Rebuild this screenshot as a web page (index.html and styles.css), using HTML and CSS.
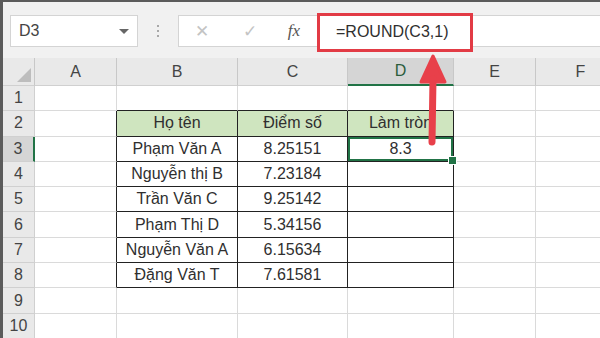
FILE: index.html
```html
<!DOCTYPE html>
<html lang="vi">
<head>
  <meta charset="UTF-8" />
  <title>ROUND - Excel</title>
  <link rel="stylesheet" href="styles.css">
</head>
<body>
  <div class="window">
    <div class="toolbar">
      <div class="name-box">
        <span>D3</span>
        <span class="caret"></span>
      </div>
      <div class="grip"><i></i><i></i><i></i></div>
      <div class="formula-bar">
        <span class="btn cancel">✕</span>
        <span class="btn ok">✓</span>
        <span class="btn fx">fx</span>
        <div class="formula">=ROUND(C3,1)</div>
      </div>
    </div>

    <div class="sheet">
      <div class="ch corner"></div>
      <div class="ch">A</div>
      <div class="ch">B</div>
      <div class="ch">C</div>
      <div class="ch active">D</div>
      <div class="ch">E</div>
      <div class="ch">F</div>

      <div class="rh">1</div>
      <div class="c"></div><div class="c top"></div><div class="c top"></div><div class="c top"></div><div class="c"></div><div class="c"></div>

      <div class="rh">2</div>
      <div class="c left"></div><div class="c t head">Họ tên</div><div class="c t head">Điểm số</div><div class="c t head">Làm tròn</div><div class="c"></div><div class="c"></div>

      <div class="rh active">3</div>
      <div class="c left"></div><div class="c t">Phạm Văn A</div><div class="c t">8.25151</div><div class="c t selected">8.3</div><div class="c"></div><div class="c"></div>

      <div class="rh">4</div>
      <div class="c left"></div><div class="c t">Nguyễn thị B</div><div class="c t">7.23184</div><div class="c t"></div><div class="c"></div><div class="c"></div>

      <div class="rh">5</div>
      <div class="c left"></div><div class="c t">Trần Văn C</div><div class="c t">9.25142</div><div class="c t"></div><div class="c"></div><div class="c"></div>

      <div class="rh">6</div>
      <div class="c left"></div><div class="c t">Phạm Thị D</div><div class="c t">5.34156</div><div class="c t"></div><div class="c"></div><div class="c"></div>

      <div class="rh">7</div>
      <div class="c left"></div><div class="c t">Nguyễn Văn A</div><div class="c t">6.15634</div><div class="c t"></div><div class="c"></div><div class="c"></div>

      <div class="rh">8</div>
      <div class="c left"></div><div class="c t">Đặng Văn T</div><div class="c t">7.61581</div><div class="c t"></div><div class="c"></div><div class="c"></div>

      <div class="rh">9</div>
      <div class="c"></div><div class="c"></div><div class="c"></div><div class="c"></div><div class="c"></div><div class="c"></div>

      <div class="rh">10</div>
      <div class="c"></div><div class="c"></div><div class="c"></div><div class="c"></div><div class="c"></div><div class="c"></div>
    </div>

    <!-- flèche rouge vers la barre de formule -->
    <svg class="arrow" width="40" height="95" viewBox="0 0 40 95">
      <path d="M20 3 L32 29 L8 29 Z" fill="#e8404a" stroke="#e8404a" stroke-width="3" stroke-linejoin="round"/>
      <line x1="20" y1="26" x2="19" y2="89" stroke="#e8404a" stroke-width="7" stroke-linecap="round"/>
    </svg>
  </div>
</body>
</html>
```

FILE: styles.css
```css
:root {
  --frame: #5b5b5b;
  --bar: #f1f1f1;
  --head: #e9e9e9;
  --head-active: #d5d5d5;
  --grid: #dadada;
  --ink: #2f2f2f;
  --green: #217346;
  --fill: #cfe5bf;
  --red: #e23b45;
}

* {
  margin: 0;
  padding: 0;
  box-sizing: border-box;
}

body {
  font-family: 'Liberation Sans', Arial, sans-serif;
  color: var(--ink);
  background: #ffffff;
  width: 600px;
  height: 338px;
  overflow: hidden;
}

.window {
  position: relative;
  height: 338px;
  border-left: 3px solid var(--frame);
  border-top: 2px solid var(--frame);
  overflow: hidden;
}

.toolbar {
  height: 56px;
  background: var(--bar);
  display: flex;
  align-items: flex-start;
  padding-top: 13px;
  padding-left: 7px;
}

.name-box {
  width: 128px;
  height: 32px;
  background: #ffffff;
  border: 1px solid #d4d4d4;
  display: flex;
  align-items: center;
  justify-content: space-between;
  padding: 0 8px 0 8px;
  font-size: 16px;
  color: #444;
}

.caret {
  width: 0;
  height: 0;
  border-left: 5px solid transparent;
  border-right: 5px solid transparent;
  border-top: 5px solid #666;
}

.grip {
  width: 40px;
  height: 32px;
  display: flex;
  flex-direction: column;
  align-items: center;
  justify-content: center;
  gap: 3px;
}

.grip i {
  width: 2px;
  height: 2px;
  background: #a8a8a8;
}

.formula-bar {
  flex: 1;
  height: 32px;
  background: #ffffff;
  border: 1px solid #d4d4d4;
  border-right: none;
  display: flex;
  align-items: center;
}

.btn {
  color: #c4c4c4;
  font-size: 17px;
  text-align: center;
}

.btn.cancel {
  width: 46px;
}

.btn.ok {
  width: 50px;
}

.btn.fx {
  width: 38px;
  font-family: 'Liberation Serif', serif;
  font-style: italic;
  color: #555;
}

.formula {
  margin-left: 4px;
  width: 156px;
  height: 39px;
  margin-top: 2px;
  border: 3px solid var(--red);
  background: #ffffff;
  display: flex;
  align-items: center;
  padding-left: 16px;
  font-size: 16px;
  color: var(--ink);
}

.sheet {
  display: grid;
  grid-template-columns: 32px 82px 121px 110px 106px 82px 90px;
  grid-template-rows: 28px repeat(10, 25.3px);
  font-size: 16px;
}

.ch, .rh {
  background: var(--head);
  color: #444;
  display: flex;
  align-items: center;
  justify-content: center;
  border-right: 1px solid #d0d0d0;
  border-bottom: 1px solid #d0d0d0;
}

.ch {
  border-right-color: #c8c8c8;
}

.corner {
  position: relative;
}

.corner::after {
  content: "";
  position: absolute;
  right: 3px;
  bottom: 3px;
  width: 0;
  height: 0;
  border-left: 14px solid transparent;
  border-bottom: 14px solid #bdbdbd;
}

.ch.active {
  background: var(--head-active);
  color: #2b5d3c;
  border-bottom: 2px solid var(--green);
}

.rh.active {
  background: var(--head-active);
  border-right: 2px solid var(--green);
}

.c {
  border-right: 1px solid var(--grid);
  border-bottom: 1px solid var(--grid);
  display: flex;
  align-items: center;
  justify-content: center;
}

.c.left {
  border-right: 1px solid #222;
}

.c.top {
  border-bottom: 1px solid #222;
}

.c.t {
  border-right: 1px solid #222;
  border-bottom: 1px solid #222;
}

.c.head {
  background: var(--fill);
}

.c.selected {
  position: relative;
  box-shadow: inset 0 0 0 2px var(--green);
}

.c.selected::after {
  content: "";
  position: absolute;
  right: -4px;
  bottom: -4px;
  width: 7px;
  height: 7px;
  background: var(--green);
  border: 1px solid #ffffff;
}

.arrow {
  position: absolute;
  left: 410px;
  top: 51px;
}
```
